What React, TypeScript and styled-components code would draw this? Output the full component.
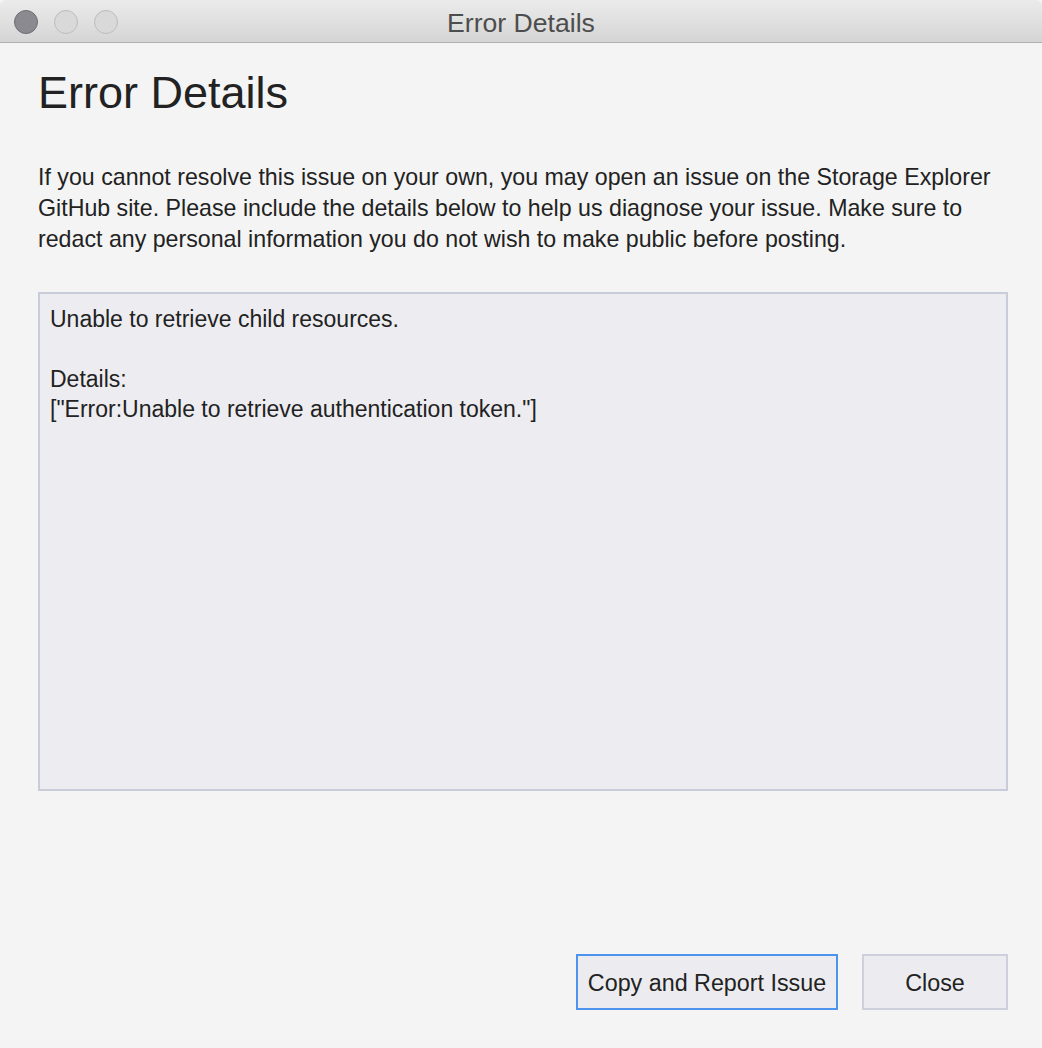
import React from 'react';
import styled, { createGlobalStyle } from 'styled-components';

const GlobalStyle = createGlobalStyle`
  html, body {
    margin: 0;
    padding: 0;
    background: #f4f4f4;
  }
  body {
    font-family: "Liberation Sans", Arial, Helvetica, sans-serif;
    color: #222222;
  }
`;

const Window = styled.div`
  width: 1042px;
  height: 1048px;
  display: flex;
  flex-direction: column;
  background: #f4f4f4;
  overflow: hidden;
`;

const TitleBar = styled.div`
  position: relative;
  height: 42px;
  flex-shrink: 0;
  display: flex;
  align-items: center;
  justify-content: center;
  background: linear-gradient(#ebebeb, #d5d5d5);
  border-bottom: 1px solid #b1b1b1;
  border-radius: 6px 6px 0 0;
`;

const Lights = styled.div`
  position: absolute;
  left: 14px;
  top: 10px;
  display: flex;
  gap: 16px;
`;

const Light = styled.span<{ $active?: boolean }>`
  width: 24px;
  height: 24px;
  box-sizing: border-box;
  border-radius: 50%;
  background: ${(p) => (p.$active ? '#8b8a91' : '#d9d9d9')};
  border: 1px solid ${(p) => (p.$active ? '#6e6d74' : '#bcbcbc')};
`;

const WindowTitle = styled.div`
  padding-top: 4px;
  font-size: 26.6px;
  color: #4d4d4d;
`;

const Content = styled.div`
  flex: 1;
  display: flex;
  flex-direction: column;
  padding: 0 34px 38px 38px;
`;

const Heading = styled.h1`
  margin: 22px 0 0 0;
  font-size: 45px;
  font-weight: 300;
  line-height: 56px;
  color: #222222;
`;

const Intro = styled.p`
  margin: 41px 0 0 0;
  font-size: 23.2px;
  line-height: 31px;
  color: #222222;
`;

const DetailsBox = styled.div`
  margin-top: 37px;
  height: 499px;
  box-sizing: border-box;
  border: 2px solid #c9ccd9;
  background: #ededf1;
  padding: 10px 10px;
  font-size: 23px;
  line-height: 30px;
  color: #222222;
  white-space: pre-wrap;
`;

const Actions = styled.div`
  margin-top: auto;
  display: flex;
  justify-content: flex-end;
  gap: 24px;
`;

const Button = styled.button<{ $primary?: boolean }>`
  width: ${(p) => (p.$primary ? '262px' : '146px')};
  height: 56px;
  box-sizing: border-box;
  padding: 2px 0 0 0;
  font-family: "Liberation Sans", Arial, Helvetica, sans-serif;
  font-size: 23.3px;
  color: #222222;
  background: #ececf0;
  border: 2px solid ${(p) => (p.$primary ? '#4d95ec' : '#cdd0dc')};
  border-radius: 0;
  cursor: pointer;
`;

const details = `Unable to retrieve child resources.

Details:
["Error:Unable to retrieve authentication token."]`;

export default function App() {
  return (
    <Window>
      <GlobalStyle />
      <TitleBar>
        <Lights>
          <Light $active />
          <Light />
          <Light />
        </Lights>
        <WindowTitle>Error Details</WindowTitle>
      </TitleBar>
      <Content>
        <Heading>Error Details</Heading>
        <Intro>
          If you cannot resolve this issue on your own, you may open an issue on the Storage Explorer
          GitHub site. Please include the details below to help us diagnose your issue. Make sure to
          redact any personal information you do not wish to make public before posting.
        </Intro>
        <DetailsBox>{details}</DetailsBox>
        <Actions>
          <Button $primary>Copy and Report Issue</Button>
          <Button>Close</Button>
        </Actions>
      </Content>
    </Window>
  );
}
